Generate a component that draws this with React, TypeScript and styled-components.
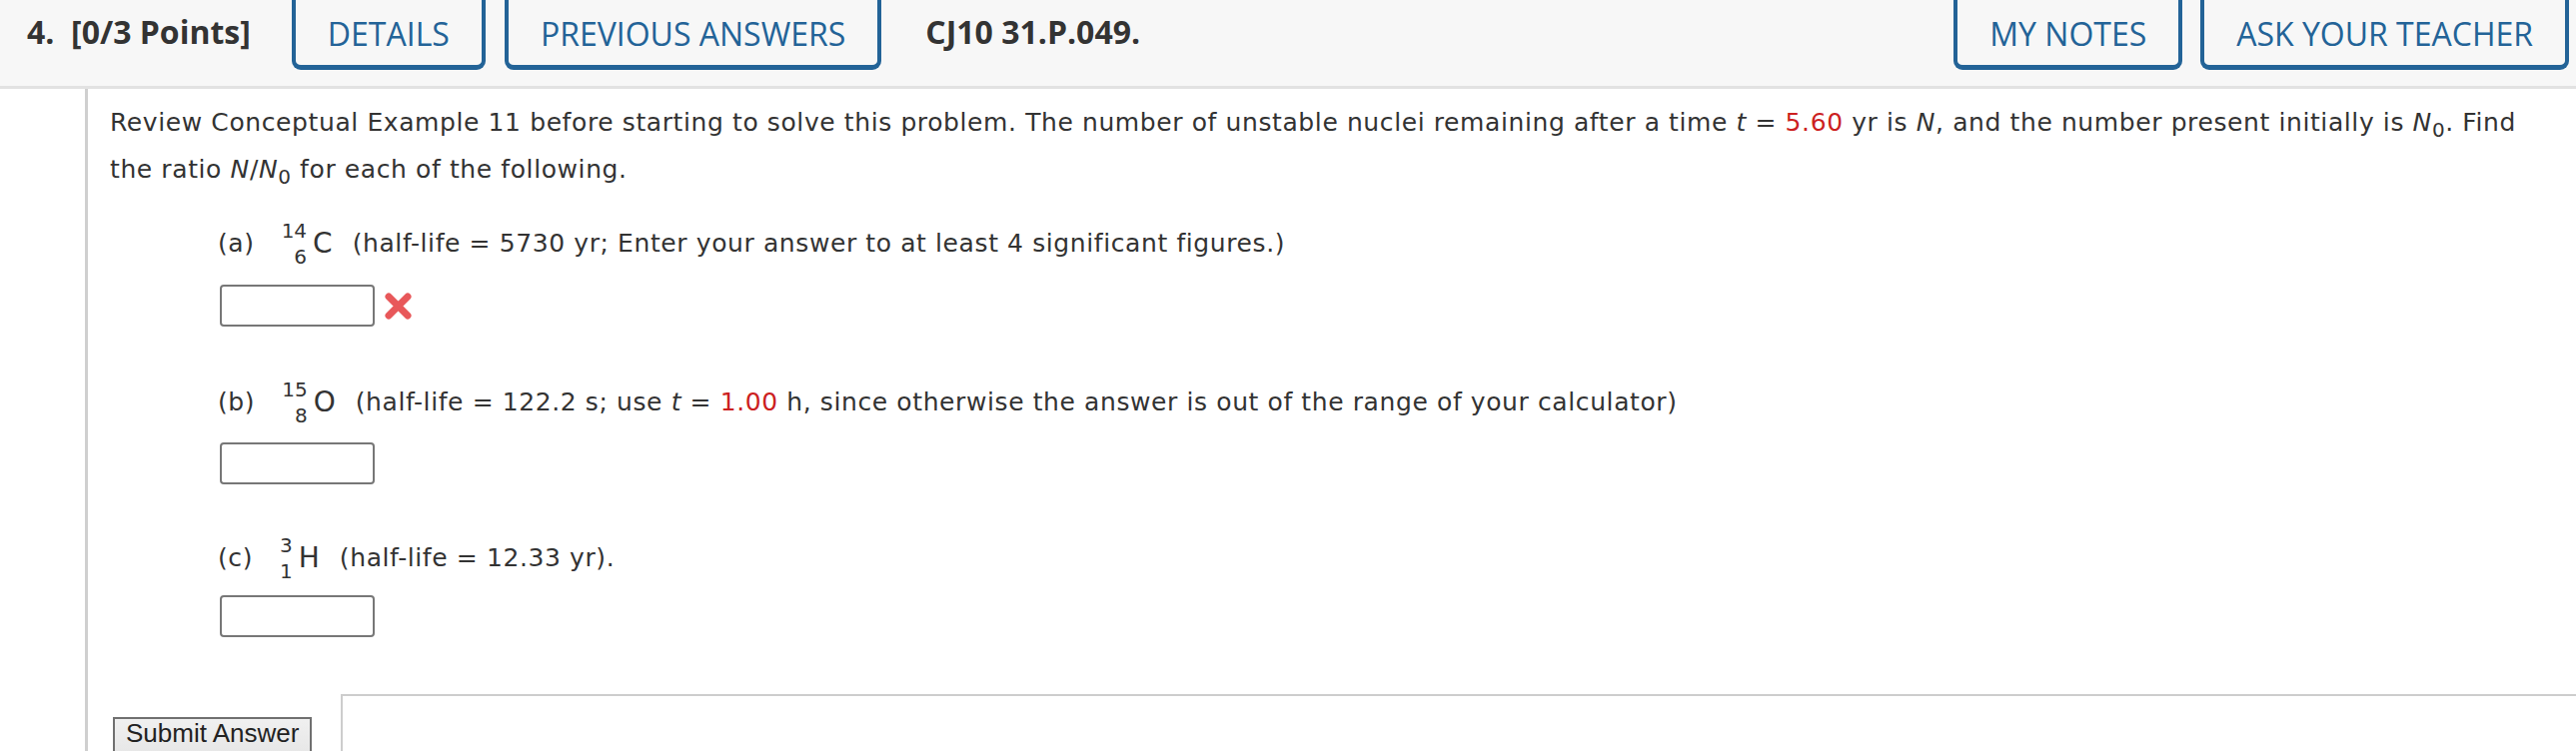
import styled, { createGlobalStyle } from "styled-components";

// estilos globais
const GlobalStyle = createGlobalStyle`
  * {
    margin: 0;
    padding: 0;
    box-sizing: border-box;
  }
  body {
    background: #fff;
    overflow: hidden;
    font-family: "DejaVu Sans", Verdana, sans-serif;
    color: #333;
  }
`;

// barra de topo com os botões
const Header = styled.div`
  display: flex;
  align-items: flex-start;
  height: 89px;
  background: #f7f7f7;
  border-bottom: 3px solid #e2e2e2;
  padding: 0 7px 0 27px;
  font-family: "Open Sans", sans-serif;
  font-size: 32px;
`;

const HeaderLabel = styled.div<{ $gap: number }>`
  height: 63px;
  display: flex;
  align-items: center;
  font-weight: 700;
  color: #333;
  margin-right: ${(p) => p.$gap}px;
  white-space: nowrap;
`;

const TabButton = styled.button<{ $gap?: number }>`
  margin-top: -10px;
  height: 80px;
  padding: 11px 32px 0;
  margin-right: ${(p) => p.$gap ?? 0}px;
  display: flex;
  align-items: center;
  background: transparent;
  border: 4px solid #236397;
  border-top: none;
  border-bottom-width: 5px;
  border-radius: 0 0 9px 9px;
  color: #236397;
  font-family: "Open Sans", sans-serif;
  font-size: 32px;
  font-weight: 500;
  white-space: nowrap;
`;

const Spacer = styled.div`
  flex: 1;
`;

// coluna principal com a linha à esquerda
const Main = styled.div`
  margin-left: 85px;
  border-left: 3px solid #cfcfcf;
  padding: 10px 0 0 22px;
  height: 663px;
  overflow: hidden;
  font-size: 25px;
  letter-spacing: 0.6px;
  line-height: 47px;

  sub {
    font-size: 0.8em;
    line-height: 0;
    vertical-align: -0.3em;
  }
`;

const Intro = styled.p`
  width: 2440px;
`;

const Part = styled.div<{ $top: number }>`
  margin: ${(p) => p.$top}px 0 0 108px;
`;

const PartText = styled.div`
  display: flex;
  align-items: center;
  height: 47px;
  white-space: nowrap;
`;

const Isotope = styled.span`
  display: inline-flex;
  align-items: center;
  margin: 0 20px 0 27px;
  letter-spacing: 0;
`;

const Nums = styled.span`
  display: inline-flex;
  flex-direction: column;
  align-items: flex-end;
  font-size: 20px;
  line-height: 26px;
  margin-right: 6px;
`;

const Symbol = styled.span`
  font-size: 28px;
`;

const Red = styled.span`
  color: #cc1f1f;
`;

const AnswerRow = styled.div<{ $top: number }>`
  display: flex;
  align-items: center;
  margin: ${(p) => p.$top}px 0 0 2px;
`;

const AnswerBox = styled.input`
  width: 155px;
  height: 42px;
  border: 2px solid #777;
  border-radius: 4px;
  background: #fff;
`;

const WrongMark = styled.svg`
  width: 31px;
  height: 31px;
  margin-left: 8px;
`;

const SubmitRow = styled.div`
  display: flex;
  align-items: flex-start;
  margin-top: 57px;
`;

const SubmitButton = styled.button`
  margin: 23px 0 0 3px;
  padding: 0 11px 20px;
  border: 2px solid #707070;
  background: linear-gradient(#f0f0f0, #e3e3e3);
  color: #222;
  font-family: "Liberation Sans", Arial, sans-serif;
  font-size: 26px;
  letter-spacing: 0;
  line-height: 28px;
`;

const Feedback = styled.div`
  flex: 1;
  margin-left: 29px;
  height: 60px;
  border: 2px solid #cdcdcd;
  border-right: none;
`;

const i = (t: string) => <i>{t}</i>;

const App = () => {
  return (
    <>
      <GlobalStyle />
      <Header>
        <HeaderLabel $gap={41}>4.&nbsp; [0/3 Points]</HeaderLabel>
        <TabButton $gap={19}>DETAILS</TabButton>
        <TabButton $gap={44}>PREVIOUS ANSWERS</TabButton>
        <HeaderLabel $gap={0}>CJ10 31.P.049.</HeaderLabel>
        <Spacer />
        <TabButton $gap={18}>MY NOTES</TabButton>
        <TabButton>ASK YOUR TEACHER</TabButton>
      </Header>
      <Main>
        <Intro>
          Review Conceptual Example 11 before starting to solve this problem. The number of unstable
          nuclei remaining after a time {i("t")} = <Red>5.60</Red> yr is {i("N")}, and the number
          present initially is {i("N")}
          <sub>0</sub>. Find the ratio {i("N")}/{i("N")}
          <sub>0</sub> for each of the following.
        </Intro>

        <Part $top={27}>
          <PartText>
            (a)
            <Isotope>
              <Nums>
                <span>14</span>
                <span>6</span>
              </Nums>
              <Symbol>C</Symbol>
            </Isotope>
            (half-life = 5730 yr; Enter your answer to at least 4 significant figures.)
          </PartText>
          <AnswerRow $top={18}>
            <AnswerBox />
            <WrongMark viewBox="0 0 31 31">
              <path
                d="M6 6 L25 25 M25 6 L6 25"
                stroke="#e8585a"
                strokeWidth="7"
                strokeLinecap="round"
              />
            </WrongMark>
          </AnswerRow>
        </Part>

        <Part $top={52}>
          <PartText>
            (b)
            <Isotope>
              <Nums>
                <span>15</span>
                <span>8</span>
              </Nums>
              <Symbol>O</Symbol>
            </Isotope>
            (half-life = 122.2 s; use&nbsp;{i("t")}&nbsp;=&nbsp;<Red>1.00</Red>&nbsp;h, since
            otherwise the answer is out of the range of your calculator)
          </PartText>
          <AnswerRow $top={17}>
            <AnswerBox />
          </AnswerRow>
        </Part>

        <Part $top={50}>
          <PartText>
            (c)
            <Isotope>
              <Nums>
                <span>3</span>
                <span>1</span>
              </Nums>
              <Symbol>H</Symbol>
            </Isotope>
            (half-life = 12.33 yr).
          </PartText>
          <AnswerRow $top={14}>
            <AnswerBox />
          </AnswerRow>
        </Part>

        <SubmitRow>
          <SubmitButton>Submit Answer</SubmitButton>
          <Feedback />
        </SubmitRow>
      </Main>
    </>
  );
};

export default App;
